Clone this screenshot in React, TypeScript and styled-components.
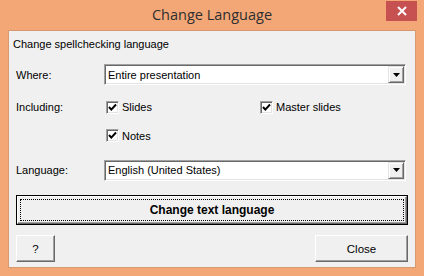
import React from "react";
import styled, { createGlobalStyle } from "styled-components";

const GlobalStyle = createGlobalStyle`
  html, body {
    margin: 0;
    padding: 0;
    background: #f3a777;
  }
  * {
    box-sizing: border-box;
  }
`;

const Window = styled.div`
  width: 424px;
  height: 276px;
  background: #f3a777;
  display: flex;
  flex-direction: column;
  font-family: "Liberation Sans", Arial, sans-serif;
  font-size: 11px;
  color: #000;
`;

const TitleBar = styled.div`
  position: relative;
  height: 30px;
  display: flex;
  align-items: center;
  justify-content: center;
  font-family: "Open Sans", "Noto Sans", sans-serif;
  font-size: 14.5px;
  color: #2e2e2e;
  padding-bottom: 1px;
`;

const CloseBox = styled.div`
  position: absolute;
  top: 1px;
  right: 7px;
  width: 31px;
  height: 20px;
  background: #c75050;
  display: flex;
  align-items: center;
  justify-content: center;
`;

const Client = styled.div`
  margin: 0 8px 8px 8px;
  flex: 1;
  background: #f0f0f0;
  border: 1px solid #d79a70;
  display: flex;
  flex-direction: column;
`;

const Heading = styled.div`
  padding: 6px 0 0 4px;
  line-height: 14px;
  height: 20px;
`;

const Body = styled.div`
  padding: 13px 7px 0 7px;
  display: flex;
  flex-direction: column;
`;

const Row = styled.div<{ $gap: number; $h: number }>`
  display: grid;
  grid-template-columns: 88px 1fr;
  align-items: center;
  margin-top: ${(p) => p.$gap}px;
  height: ${(p) => p.$h}px;
`;

const ActionRow = styled.div`
  margin-top: 14px;
`;

const Label = styled.span`
  line-height: 14px;
`;

const Combo = styled.div`
  width: 302px;
  height: 21px;
  background: #fff;
  border-top: 1px solid #a0a0a0;
  border-left: 1px solid #a0a0a0;
  border-right: 1px solid #fff;
  border-bottom: 1px solid #fff;
  box-shadow: inset 1px 1px 0 #696969, inset -1px -1px 0 #e3e3e3;
  display: flex;
  align-items: center;
  padding: 0 1px 0 3px;
`;

const ComboText = styled.span`
  flex: 1;
  line-height: 14px;
`;

const DropButton = styled.div`
  width: 16px;
  height: 17px;
  background: #f0f0f0;
  border-top: 1px solid #e3e3e3;
  border-left: 1px solid #e3e3e3;
  border-right: 1px solid #696969;
  border-bottom: 1px solid #696969;
  box-shadow: inset 1px 1px 0 #fff, inset -1px -1px 0 #a0a0a0;
  display: flex;
  align-items: center;
  justify-content: center;
`;

const CheckGrid = styled.div`
  display: grid;
  grid-template-columns: 154px 1fr;
  padding-left: 2px;
`;

const CheckItem = styled.label`
  display: flex;
  align-items: center;
  gap: 3px;
  height: 13px;
`;

const Box = styled.span`
  width: 13px;
  height: 13px;
  background: #fff;
  border-top: 1px solid #a0a0a0;
  border-left: 1px solid #a0a0a0;
  border-right: 1px solid #fff;
  border-bottom: 1px solid #fff;
  box-shadow: inset 1px 1px 0 #696969, inset -1px -1px 0 #e3e3e3;
  display: flex;
  align-items: center;
  justify-content: center;
`;

const Button = styled.div<{ $default?: boolean; $w?: number }>`
  height: ${(p) => (p.$default ? 30 : 27)}px;
  width: ${(p) => (p.$w ? `${p.$w}px` : "auto")};
  background: #f0f0f0;
  border: ${(p) => (p.$default ? "1px solid #000" : "none")};
  display: flex;
  align-items: center;
  justify-content: center;
  font-weight: ${(p) => (p.$default ? "bold" : "normal")};
  font-size: ${(p) => (p.$default ? 12 : 11.5)}px;
`;

const Bevel = styled.div`
  width: 100%;
  height: 100%;
  border-top: 1px solid #fff;
  border-left: 1px solid #fff;
  border-right: 1px solid #696969;
  border-bottom: 1px solid #696969;
  box-shadow: inset -1px -1px 0 #a0a0a0;
  display: flex;
  align-items: center;
  justify-content: center;
  padding: 2px;
`;

const Focus = styled.div`
  width: 100%;
  height: 100%;
  border: 1px dotted #000;
  display: flex;
  align-items: center;
  justify-content: center;
`;

const BottomRow = styled.div`
  display: flex;
  justify-content: space-between;
  margin-top: 10px;
`;

const Check = () => (
  <Box>
    <svg width="9" height="9" viewBox="0 0 9 9">
      <path d="M1 4 L3.3 6.6 L8 1.5" fill="none" stroke="#000" strokeWidth="2" />
    </svg>
  </Box>
);

const Arrow = () => (
  <svg width="7" height="4" viewBox="0 0 7 4">
    <path d="M0 0 H7 L3.5 4 Z" fill="#000" />
  </svg>
);

const ComboBox = ({ value }: { value: string }) => (
  <Combo>
    <ComboText>{value}</ComboText>
    <DropButton>
      <Arrow />
    </DropButton>
  </Combo>
);

export default function App() {
  return (
    <>
      <GlobalStyle />
      <Window>
        <TitleBar>
          Change Language
          <CloseBox>
            <svg width="10" height="10" viewBox="0 0 10 10">
              <path d="M1 1 L9 9 M9 1 L1 9" stroke="#fff" strokeWidth="2" />
            </svg>
          </CloseBox>
        </TitleBar>
        <Client>
          <Heading>Change spellchecking language</Heading>
          <Body>
            <Row $gap={0} $h={21}>
              <Label>Where:</Label>
              <ComboBox value="Entire presentation" />
            </Row>
            <Row $gap={15} $h={13}>
              <Label>Including:</Label>
              <CheckGrid>
                <CheckItem>
                  <Check />
                  Slides
                </CheckItem>
                <CheckItem>
                  <Check />
                  Master slides
                </CheckItem>
              </CheckGrid>
            </Row>
            <Row $gap={16} $h={13}>
              <span />
              <CheckGrid>
                <CheckItem>
                  <Check />
                  Notes
                </CheckItem>
              </CheckGrid>
            </Row>
            <Row $gap={17} $h={22}>
              <Label>Language:</Label>
              <ComboBox value="English (United States)" />
            </Row>
            <ActionRow>
              <Button $default>
                <Bevel>
                  <Focus>Change text language</Focus>
                </Bevel>
              </Button>
            </ActionRow>
            <BottomRow>
              <Button $w={39}>
                <Bevel>?</Bevel>
              </Button>
              <Button $w={93}>
                <Bevel>Close</Bevel>
              </Button>
            </BottomRow>
          </Body>
        </Client>
      </Window>
    </>
  );
}
